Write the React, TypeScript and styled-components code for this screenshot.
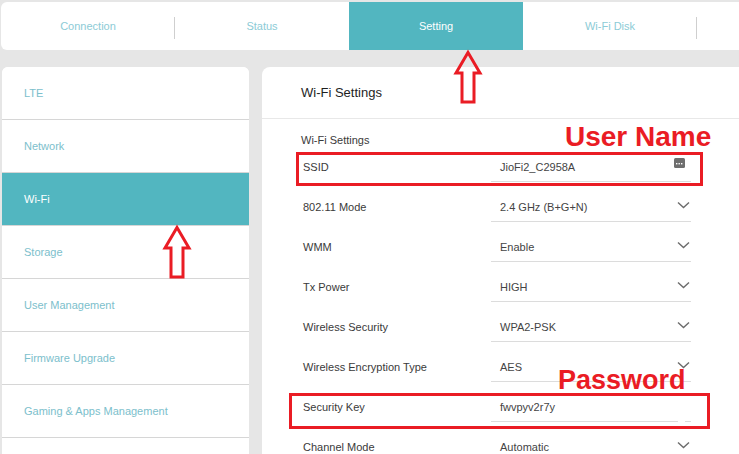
import * as React from 'react';
import styled, {createGlobalStyle} from 'styled-components';

const GlobalStyle = createGlobalStyle`
  html, body {
    margin: 0;
    padding: 0;
    background: #e6e6e6;
    font-family: "Liberation Sans", Arial, sans-serif;
    overflow: hidden;
  }
`;

const TEAL = '#52b6c0';
const RED = '#ea1c24';

const Page = styled.div`
  position: relative;
  width: 739px;
  height: 454px;
  padding-top: 2px;
  box-sizing: border-box;
  overflow: hidden;
`;

const TabBar = styled.div`
  display: flex;
  height: 48px;
  margin-left: 1px;
  width: 760px;
  background: #fff;
  border-radius: 6px 0 0 6px;
  overflow: hidden;
`;

const Tab = styled.div<{ $active?: boolean; $divider?: boolean }>`
  position: relative;
  width: 174px;
  flex-shrink: 0;
  display: flex;
  align-items: center;
  justify-content: center;
  font-size: 11px;
  color: ${p => (p.$active ? '#fff' : '#8ccbd6')};
  background: ${p => (p.$active ? TEAL : 'transparent')};
  &::after {
    content: '';
    display: ${p => (p.$divider ? 'block' : 'none')};
    position: absolute;
    right: 0;
    top: 15px;
    height: 22px;
    width: 1px;
    background: #cfcfcf;
  }
`;

const Body = styled.div`
  display: flex;
  gap: 13px;
  margin-top: 17px;
  padding-left: 2px;
`;

const Sidebar = styled.div`
  width: 247px;
  flex-shrink: 0;
  background: #fff;
  border-radius: 6px 6px 0 0;
  overflow: hidden;
`;

const NavItem = styled.div<{ $active?: boolean }>`
  height: 52px;
  display: flex;
  align-items: center;
  padding-left: 22px;
  font-size: 11px;
  color: ${p => (p.$active ? '#fff' : '#7cc0cc')};
  background: ${p => (p.$active ? TEAL : '#fff')};
  border-bottom: 1px solid #d6d6d6;
`;

const Panel = styled.div`
  flex: 1;
  background: #fff;
  border-radius: 8px 0 0 0;
  height: 400px;
`;

const PanelHeader = styled.div`
  height: 51px;
  display: flex;
  align-items: center;
  padding-left: 39px;
  font-size: 13px;
  color: #1e1e1e;
  border-bottom: 1px solid #e8e8e8;
`;

const SectionLabel = styled.div`
  padding: 15px 0 0 39px;
  height: 13px;
  line-height: 13px;
  font-size: 11px;
  color: #3a3a3a;
`;

const Row = styled.div`
  display: flex;
  align-items: center;
  height: 40px;
  padding-left: 41px;
`;

const Label = styled.div`
  width: 188px;
  font-size: 11px;
  color: #3a3a3a;
`;

// the security key field has its underline broken near the right end
const Field = styled.div<{ $split?: boolean }>`
  position: relative;
  width: 200px;
  height: 30px;
  box-sizing: border-box;
  display: flex;
  align-items: center;
  justify-content: space-between;
  padding: 0 1px 0 9px;
  font-size: 11px;
  color: #444;
  border-bottom: 1px solid #dcdcdc;
  ${p => p.$split && `
    &::after {
      content: '';
      position: absolute;
      right: 6px;
      bottom: -1px;
      width: 7px;
      height: 1px;
      background: #fff;
    }
  `}
`;

const Chevron = () => (
  <svg width="13" height="8" viewBox="0 0 13 8" style={{marginTop: -4}}>
    <path d="M1 1.5 L6.5 6.5 L12 1.5" fill="none" stroke="#6b6b6b" strokeWidth="1.4"/>
  </svg>
);

const KeyIcon = () => (
  <svg width="11" height="10" viewBox="0 0 11 10" style={{marginTop: -8, marginRight: 5}}>
    <rect x="0" y="0" width="11" height="10" rx="1.5" fill="#6e6e6e"/>
    <rect x="2" y="5" width="1.4" height="1.4" fill="#fff"/>
    <rect x="4.5" y="5" width="1.4" height="1.4" fill="#fff"/>
    <rect x="7" y="5" width="1.4" height="1.4" fill="#fff"/>
  </svg>
);

const Box = styled.div<{ $x: number; $y: number; $w: number; $h: number }>`
  position: absolute;
  left: ${p => p.$x}px;
  top: ${p => p.$y}px;
  width: ${p => p.$w}px;
  height: ${p => p.$h}px;
  box-sizing: border-box;
  border: 3px solid ${RED};
  pointer-events: none;
`;

const Note = styled.div<{ $x: number; $y: number; $size: number }>`
  position: absolute;
  left: ${p => p.$x}px;
  top: ${p => p.$y}px;
  font-family: "Liberation Sans", Arial, sans-serif;
  font-weight: bold;
  font-size: ${p => p.$size}px;
  line-height: ${p => p.$size}px;
  color: ${RED};
  white-space: nowrap;
`;

const ArrowWrap = styled.svg<{ $x: number; $y: number }>`
  position: absolute;
  left: ${p => p.$x}px;
  top: ${p => p.$y}px;
  overflow: visible;
`;

const UpArrow = ({x, y}: { x: number; y: number }) => (
  <ArrowWrap $x={x} $y={y} width="28" height="54" viewBox="0 0 28 54">
    <path
      d="M14 1.5 L26 22 L20 22 L20 51 L8 51 L8 22 L2 22 Z"
      fill="none"
      stroke={RED}
      strokeWidth="3"
      strokeLinejoin="miter"
    />
  </ArrowWrap>
);

const tabs = ['Connection', 'Status', 'Setting', 'Wi-Fi Disk', ''];
const nav = [
  'LTE',
  'Network',
  'Wi-Fi',
  'Storage',
  'User Management',
  'Firmware Upgrade',
  'Gaming & Apps Management',
  '',
];

type Setting = { label: string; value: string; kind: 'text' | 'select' | 'key' };

const settings: Setting[] = [
  {label: 'SSID', value: 'JioFi2_C2958A', kind: 'text'},
  {label: '802.11 Mode', value: '2.4 GHz (B+G+N)', kind: 'select'},
  {label: 'WMM', value: 'Enable', kind: 'select'},
  {label: 'Tx Power', value: 'HIGH', kind: 'select'},
  {label: 'Wireless Security', value: 'WPA2-PSK', kind: 'select'},
  {label: 'Wireless Encryption Type', value: 'AES', kind: 'select'},
  {label: 'Security Key', value: 'fwvpyv2r7y', kind: 'key'},
  {label: 'Channel Mode', value: 'Automatic', kind: 'select'},
];

export default function App() {
  return (
    <Page>
      <GlobalStyle/>
      <TabBar>
        {tabs.map((t, i) => (
          <Tab key={i} $active={t === 'Setting'} $divider={i === 0 || i === 3}>{t}</Tab>
        ))}
      </TabBar>
      <Body>
        <Sidebar>
          {nav.map((n, i) => (
            <NavItem key={i} $active={n === 'Wi-Fi'}>{n}</NavItem>
          ))}
        </Sidebar>
        <Panel>
          <PanelHeader>Wi-Fi Settings</PanelHeader>
          <SectionLabel>Wi-Fi Settings</SectionLabel>
          {settings.map(s => (
            <Row key={s.label}>
              <Label>{s.label}</Label>
              <Field $split={s.kind === 'key'}>
                <span>{s.value}</span>
                {s.kind === 'select' && <Chevron/>}
                {s.kind === 'text' && <KeyIcon/>}
              </Field>
            </Row>
          ))}
        </Panel>
      </Body>

      {/* red annotations drawn over the screenshot */}
      <UpArrow x={454} y={51}/>
      <UpArrow x={163} y={226}/>
      <Note $x={565} $y={123} $size={28}>User Name</Note>
      <Box $x={296} $y={152} $w={407} $h={34}/>
      <Note $x={558} $y={367} $size={27}>Password</Note>
      <Box $x={289} $y={393} $w={421} $h={36}/>
    </Page>
  );
}
